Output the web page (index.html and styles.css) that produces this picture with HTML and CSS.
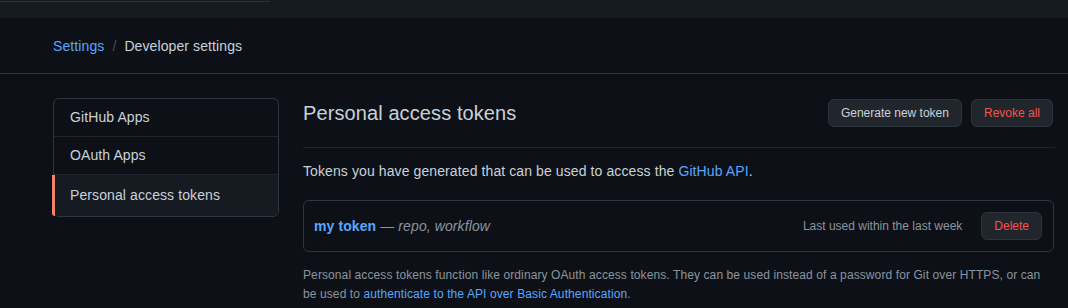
FILE: index.html
```html
<!DOCTYPE html>
<html lang="en">
<head>
<meta charset="utf-8">
<title>Personal access tokens</title>
<link rel="stylesheet" href="styles.css">
</head>
<body>
<div class="topbar"><div class="topline"></div></div>
<header class="pagehead">
  <nav class="breadcrumb">
    <a class="link" href="#">Settings</a>
    <span class="sep">/</span>
    <span class="current">Developer settings</span>
  </nav>
</header>
<div class="layout">
  <nav class="menu">
    <a class="menu-item" href="#">GitHub Apps</a>
    <a class="menu-item" href="#">OAuth Apps</a>
    <a class="menu-item selected" href="#">Personal access tokens</a>
  </nav>
  <main class="main">
    <div class="subhead">
      <h2 class="title">Personal access tokens</h2>
      <div class="actions">
        <button class="btn">Generate new token</button>
        <button class="btn danger">Revoke all</button>
      </div>
    </div>
    <p class="intro">Tokens you have generated that can be used to access the <a class="link" href="#">GitHub API</a>.</p>
    <div class="token-box">
      <div class="token-name"><a class="token-link" href="#">my token</a> <em class="scopes">— repo, workflow</em></div>
      <div class="token-meta">
        <span class="last-used">Last used within the last week</span>
        <button class="btn danger">Delete</button>
      </div>
    </div>
    <p class="note">Personal access tokens function like ordinary OAuth access tokens. They can be used instead of a password for Git over HTTPS, or can be used to <a class="link" href="#">authenticate to the API over Basic Authentication</a>.</p>
  </main>
</div>
</body>
</html>
```
FILE: styles.css
```css
* { box-sizing: border-box; }
html, body {
  margin: 0;
  background: #0d1117;
  color: #c9d1d9;
  font-family: "Liberation Sans", Arial, sans-serif;
  font-size: 14px;
  letter-spacing: 0.1px;
}
a { text-decoration: none; }
.link { color: #58a6ff; }

.topbar {
  height: 18px;
  background: #161b22;
  padding-top: 1px;
}
.topline {
  width: 270px;
  height: 1px;
  background: #2b3038;
}

.pagehead {
  height: 56px;
  border-bottom: 1px solid #30363d;
  display: flex;
  align-items: center;
  padding-left: 53px;
}
.breadcrumb {
  display: flex;
  align-items: center;
  gap: 8px;
  font-size: 14px;
  line-height: 20px;
}
.sep { color: #484f58; }
.current { color: #c9d1d9; }

.layout {
  display: flex;
  gap: 24px;
  padding: 24px 13px 0 53px;
}
.menu {
  width: 226px;
  flex: none;
  align-self: flex-start;
  border: 1px solid #30363d;
  border-radius: 6px;
  display: flex;
  flex-direction: column;
}
.menu-item {
  position: relative;
  display: block;
  padding: 8px 16px;
  line-height: 21px;
  color: #c9d1d9;
  border-bottom: 1px solid #21262d;
}
.menu-item:last-child {
  border-bottom: none;
  border-radius: 0 0 6px 6px;
  padding-top: 10px;
  padding-bottom: 10px;
}
.menu-item.selected { background: #161b22; }
.menu-item.selected::before {
  content: "";
  position: absolute;
  left: -2px;
  top: 0;
  bottom: 0;
  width: 3px;
  background: #f78166;
  border-radius: 0 0 0 3px;
}

.main { flex: 1; min-width: 0; }
.subhead {
  display: flex;
  align-items: center;
  justify-content: space-between;
  padding: 1px 0 20px;
  border-bottom: 1px solid #21262d;
}
.title {
  margin: 0;
  font-size: 20px;
  font-weight: 400;
  line-height: 26px;
  color: #c9d1d9;
}
.actions { display: flex; gap: 9px; margin-right: 2px; letter-spacing: 0; }
.btn {
  font-family: inherit;
  font-size: 12px;
  line-height: 20px;
  padding: 3px 12px;
  border: 1px solid #2d333b;
  border-radius: 6px;
  background: #21262d;
  color: #c9d1d9;
}
.btn.danger { color: #f85149; }

.intro {
  margin: 13px 0 0;
  line-height: 21px;
}
.token-box {
  margin-top: 18px;
  border: 1px solid #30363d;
  border-radius: 6px;
  padding: 11px 11px 11px 10px;
  display: flex;
  align-items: center;
  justify-content: space-between;
  margin-right: 1px;
}
.token-link { color: #58a6ff; font-weight: 700; }
.scopes { color: #8b949e; }
.token-meta { display: flex; align-items: center; gap: 19px; letter-spacing: 0; }
.last-used { font-size: 12px; color: #8b949e; }

.note {
  margin: 14px 0 0;
  font-size: 12px;
  line-height: 19px;
  color: #8b949e;
}
```
